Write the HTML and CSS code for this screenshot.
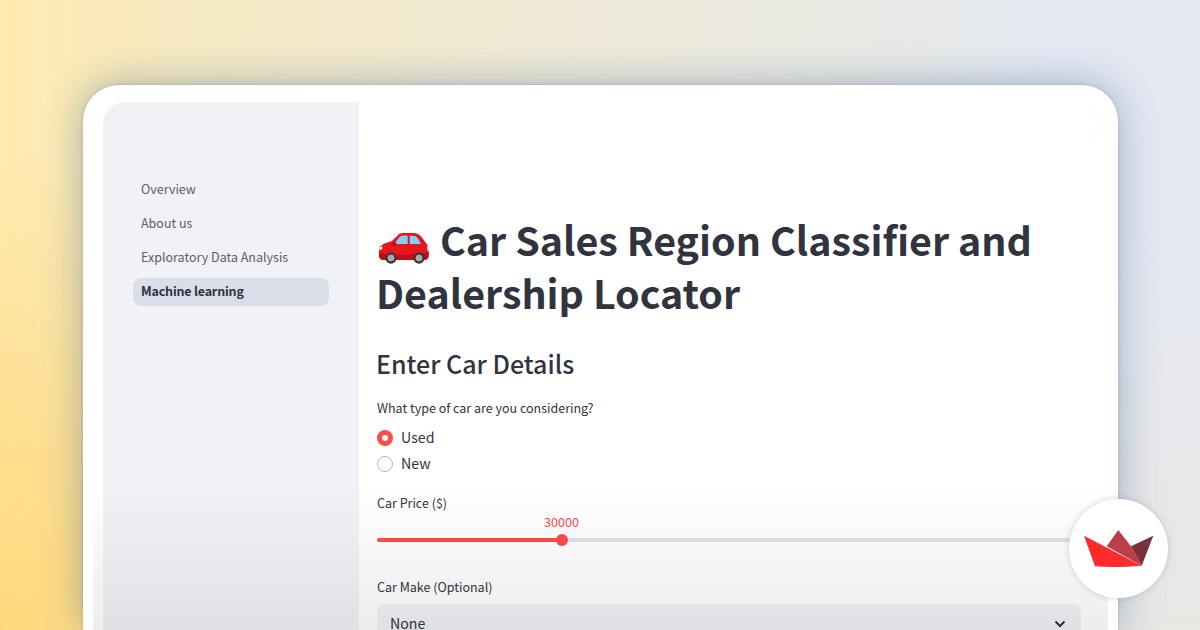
FILE: index.html
```html
<!DOCTYPE html>
<html lang="en">
<head>
    <meta charset="UTF-8">
    <meta name="viewport" content="width=device-width, initial-scale=1.0">
    <title>Car Sales Region Classifier and Dealership Locator</title>
    <link rel="stylesheet" href="styles.css">
</head>
<body>
    <div class="frame">
        <div class="app">
            <aside class="sidebar">
                <nav class="nav">
                    <a class="nav-item">Overview</a>
                    <a class="nav-item">About us</a>
                    <a class="nav-item">Exploratory Data Analysis</a>
                    <a class="nav-item active">Machine learning</a>
                </nav>
            </aside>
            <main class="content">
                <h1>
                    <svg class="car" viewBox="0 0 150 96" width="50" height="32" aria-hidden="true">
                        <path d="M0 50C2 40 20 32 38 28L58 8C62 4 70 3 75 3H105C115 4 122 8 128 16L140 32C146 38 149 44 149 52V70C149 78 145 84 135 84H12C4 84 0 78 0 70Z" fill="#e8161c"/>
                        <path d="M0 62C40 70 110 70 149 60V70C149 78 145 84 135 84H12C4 84 0 78 0 70Z" fill="#c01016"/>
                        <path d="M48 33L62 14Q68 10 86 11V36H50Z" fill="#82d0f5"/>
                        <path d="M92 11H104Q112 12 116 18L126 36H92Z" fill="#82d0f5"/>
                        <circle cx="46" cy="37" r="7" fill="#b7121a"/>
                        <path d="M1 46L10 43V52L0 54Z" fill="#fff3dc"/>
                        <path d="M144 40L149 46V56L145 56Z" fill="#f2f2f2"/>
                        <circle cx="36" cy="78" r="17" fill="#3a3a3a"/>
                        <circle cx="36" cy="78" r="10" fill="#ababab"/>
                        <circle cx="120" cy="78" r="17" fill="#3a3a3a"/>
                        <circle cx="120" cy="78" r="10" fill="#ababab"/>
                    </svg>
                    Car Sales Region Classifier and Dealership Locator
                </h1>
                <h2>Enter Car Details</h2>

                <p class="label label-type">What type of car are you considering?</p>
                <div class="radio-group">
                    <div class="radio"><span class="dot checked"></span>Used</div>
                    <div class="radio"><span class="dot"></span>New</div>
                </div>

                <p class="label label-price">Car Price ($)</p>
                <div class="slider">
                    <span class="slider-value">30000</span>
                    <div class="track">
                        <div class="track-fill"></div>
                        <span class="thumb"></span>
                    </div>
                </div>

                <p class="label label-make">Car Make (Optional)</p>
                <div class="select">
                    <span class="select-text">None</span>
                    <svg class="chevron" viewBox="0 0 12 8" width="12" height="8" aria-hidden="true">
                        <path d="M1.500 1.500L6 6l4.500-4.500" fill="none" stroke="#31333f" stroke-width="2"/>
                    </svg>
                </div>
            </main>
        </div>
        <div class="fade"></div>
    </div>

    <div class="logo-badge">
        <svg viewBox="0 0 70 38" width="70" height="38" aria-hidden="true">
            <path d="M34.300 0L22.700 16.300 57.700 35.700 47 16.300z" fill="#b9404a"/>
            <path d="M47 16.300L69.300 5.700 57.700 35.700z" fill="#7d2f3a"/>
            <path d="M0 5.700L11 36.300c15 1.300 31 .7 46.700-.6z" fill="#ff2b2b"/>
        </svg>
    </div>
</body>
</html>
```

FILE: styles.css
```css
* {
    box-sizing: border-box;
}

html, body {
    margin: 0;
    height: 630px;
    overflow: hidden;
}

body {
    position: relative;
    padding: 85px 82px 0 83px;
    font-family: "Noto Sans CJK JP", "Noto Sans", sans-serif;
    color: #31333f;
    background:
        radial-gradient(ellipse 500px 480px at 0% 100%, rgba(255, 212, 110, 0.75), rgba(255, 212, 110, 0)),
        linear-gradient(180deg, rgba(255, 220, 120, 0) 35%, rgba(255, 220, 120, 0.12) 100%),
        linear-gradient(90deg, #ffeab0 0%, #f5e9c3 17%, #efe9d6 45%, #e8e9e4 72%, #e4e8f2 88%);
}

.frame {
    position: relative;
    height: 545px;
    padding: 17px 20px 0;
    background-color: #fff;
    border-radius: 36px 36px 0 0;
    box-shadow: 0 0 38px rgba(50, 90, 140, 0.42), 0 0 3px rgba(50, 80, 120, 0.25);
}

.app {
    position: relative;
    display: flex;
    height: 100%;
    border-radius: 22px 22px 0 0;
    overflow: hidden;
}

.app::after {
    content: "";
    position: absolute;
    top: 0;
    right: 0;
    width: 44px;
    height: 44px;
    border: 1px solid transparent;
    border-right-color: #f8f8f8;
    border-radius: 50%;
}

.sidebar {
    width: 256px;
    flex-shrink: 0;
    padding: 74px 30px 0;
    background-color: #f0f2f6;
}

.nav {
    display: flex;
    flex-direction: column;
    gap: 6px;
}

.nav-item {
    height: 28px;
    padding: 0 8px;
    font-size: 12.500px;
    line-height: 26px;
    color: #5d5f69;
    border-radius: 8px;
}

.nav-item.active {
    font-weight: 700;
    letter-spacing: -0.190px;
    color: #31333f;
    background-color: #dadee9;
}

.content {
    flex: 1;
    padding: 110px 17px 0 18px;
    background-color: #fff;
}

h1 {
    margin: 0 0 0 -1px;
    font-size: 39.400px;
    line-height: 53px;
    font-weight: 700;
}

.car {
    margin: 0 2px 0 3px;
    vertical-align: -8px;
}

h2 {
    margin: 27px 0 0 -1px;
    font-size: 25px;
    line-height: 36px;
    font-weight: 500;
}

.label {
    margin: 0;
    font-size: 12.500px;
    line-height: 20px;
}

.label-type {
    margin-top: 17px;
}

.radio-group {
    margin-top: 6px;
}

.radio {
    display: flex;
    align-items: center;
    gap: 8px;
    height: 26px;
    padding-top: 1px;
    font-size: 14.200px;
    line-height: 21px;
}

.dot {
    width: 16px;
    height: 16px;
    margin-top: 1px;
    background-color: #fff;
    border: 1px solid #b4b6bb;
    border-radius: 50%;
}

.dot.checked {
    border: 5px solid #ff4b4b;
}

.label-price {
    margin-top: 17px;
}

.slider {
    position: relative;
    padding-top: 25px;
}

.slider-value {
    position: absolute;
    top: -1px;
    left: 167px;
    font-size: 12.600px;
    line-height: 20px;
    color: #ff4b4b;
}

.track {
    position: relative;
    height: 4px;
    background-color: #dfe3ea;
    border-radius: 2px;
}

.track-fill {
    width: 185px;
    height: 4px;
    background-color: #ff4b4b;
    border-radius: 2px;
}

.thumb {
    position: absolute;
    top: -4px;
    left: 179px;
    width: 12px;
    height: 12px;
    background-color: #ff4b4b;
    border-radius: 50%;
}

.label-make {
    margin-top: 35px;
}

.select {
    display: flex;
    align-items: center;
    justify-content: space-between;
    height: 40px;
    margin-top: 7px;
    padding: 0 15px 0 13px;
    font-size: 14.200px;
    background-color: #f0f2f6;
    border-radius: 8px;
}

.select-text {
    margin-bottom: 3px;
    line-height: 14px;
}

.fade {
    position: absolute;
    left: 10px;
    right: 10px;
    bottom: 0;
    height: 145px;
    background: linear-gradient(180deg, rgba(0, 0, 0, 0), rgba(0, 0, 0, 0.07));
}

.logo-badge {
    position: absolute;
    left: 1069px;
    top: 499px;
    display: flex;
    align-items: center;
    justify-content: center;
    width: 99px;
    height: 99px;
    background-color: #fff;
    border-radius: 50%;
    box-shadow: 0 0 6px rgba(100, 130, 165, 0.35);
}
```
